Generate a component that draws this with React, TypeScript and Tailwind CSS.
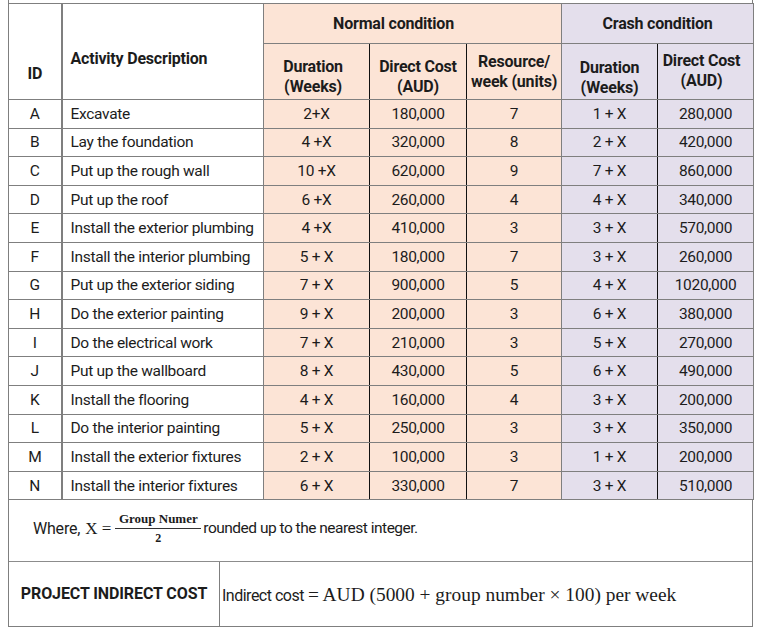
const rows: [string, string, string, string, string, string, string][] = [
  ['A', 'Excavate', '2+X', '180,000', '7', '1 + X', '280,000'],
  ['B', 'Lay the foundation', '4 +X', '320,000', '8', '2 + X', '420,000'],
  ['C', 'Put up the rough wall', '10 +X', '620,000', '9', '7 + X', '860,000'],
  ['D', 'Put up the roof', '6 +X', '260,000', '4', '4 + X', '340,000'],
  ['E', 'Install the exterior plumbing', '4 +X', '410,000', '3', '3 + X', '570,000'],
  ['F', 'Install the interior plumbing', '5 + X', '180,000', '7', '3 + X', '260,000'],
  ['G', 'Put up the exterior siding', '7 + X', '900,000', '5', '4 + X', '1020,000'],
  ['H', 'Do the exterior painting', '9 + X', '200,000', '3', '6 + X', '380,000'],
  ['I', 'Do the electrical work', '7 + X', '210,000', '3', '5 + X', '270,000'],
  ['J', 'Put up the wallboard', '8 + X', '430,000', '5', '6 + X', '490,000'],
  ['K', 'Install the flooring', '4 + X', '160,000', '4', '3 + X', '200,000'],
  ['L', 'Do the interior painting', '5 + X', '250,000', '3', '3 + X', '350,000'],
  ['M', 'Install the exterior fixtures', '2 + X', '100,000', '3', '1 + X', '200,000'],
  ['N', 'Install the interior fixtures', '6 + X', '330,000', '7', '3 + X', '510,000'],
];

const sans = "font-['Roboto','Liberation_Sans',sans-serif]";
const serif = "font-['Liberation_Serif','DejaVu_Serif',serif]";

export default function App() {
  return (
    <div className={`min-h-screen w-[768px] bg-white pl-[8px] text-[#1c1c1c] ${sans}`}>
      <div className="h-[3px] w-[745px] border-x border-[#7f7f7f]" />
      <table className="w-[745px] table-fixed border-collapse">
        <colgroup>
          <col className="w-[53px]" />
          <col className="w-[202px]" />
          <col className="w-[106px]" />
          <col className="w-[97px]" />
          <col className="w-[95px]" />
          <col className="w-[96px]" />
          <col className="w-[96px]" />
        </colgroup>
        <tbody>
          {/* header */}
          <tr className="h-[40px] text-[16px] font-bold tracking-[-0.2px]">
            <td
              rowSpan={2}
              className="border border-r-2 border-[#7f7f7f] pt-[60px] align-top text-center leading-[20px]"
            >
              ID
            </td>
            <td
              rowSpan={2}
              className="border border-[#7f7f7f] pl-[8px] pt-[45px] align-top leading-[20px]"
            >
              Activity Description
            </td>
            <td colSpan={3} className="border border-[#7f7f7f] bg-[#fce4d6] pr-[38px] text-center">
              Normal condition
            </td>
            <td colSpan={2} className="border border-[#7f7f7f] bg-[#e4dfec] text-center">
              Crash condition
            </td>
          </tr>
          <tr className="h-[56px] text-center text-[16px] font-bold leading-[20px] tracking-[-0.2px]">
            <td className="border border-[#7f7f7f] border-r-[#111] bg-[#fce4d6] pr-[7px] pt-[13px] align-top">
              Duration
              <br />
              (Weeks)
            </td>
            <td className="border border-[#7f7f7f] border-r-[#111] bg-[#fce4d6] pt-[13px] align-top">
              Direct Cost
              <br />
              (AUD)
            </td>
            <td className="border border-[#7f7f7f] bg-[#fce4d6] pt-[8px] align-top">
              Resource/
              <br />
              week (units)
            </td>
            <td className="border border-[#7f7f7f] border-r-[#111] bg-[#e4dfec] pt-[14px] align-top">
              Duration
              <br />
              (Weeks)
            </td>
            <td className="border border-[#7f7f7f] bg-[#e4dfec] pr-[8px] pt-[7px] align-top">
              Direct Cost
              <br />
              (AUD)
            </td>
          </tr>

          {/* activities */}
          {rows.map((r) => (
            <tr key={r[0]} className="h-[28.6px] text-[15.5px] leading-[20px] tracking-[-0.3px]">
              <td className="border border-r-2 border-[#7f7f7f] text-center">{r[0]}</td>
              <td className="whitespace-nowrap border border-[#7f7f7f] pl-[8px]">{r[1]}</td>
              <td className="border border-[#7f7f7f] border-r-[#111] bg-[#fce4d6] text-center">{r[2]}</td>
              <td className="border border-[#7f7f7f] border-r-[#111] bg-[#fce4d6] text-center">{r[3]}</td>
              <td className="border border-[#7f7f7f] bg-[#fce4d6] text-center">{r[4]}</td>
              <td className="border border-[#7f7f7f] border-r-[#111] bg-[#e4dfec] text-center">{r[5]}</td>
              <td className="border border-[#7f7f7f] bg-[#e4dfec] text-center">{r[6]}</td>
            </tr>
          ))}
        </tbody>
      </table>

      <div className="w-[745px] border-x border-b border-[#7f7f7f]">
        {/* note */}
        <div className="h-[62px] border-b border-[#8c8c8c] pl-[24px] pt-[12px]">
          <div className="flex items-center">
            <span className="text-[16px] tracking-[-0.2px]">Where,</span>
            <span className={`${serif} ml-[5px] text-[17px]`}>X =</span>
            <span className="ml-[4px] mr-[2px] inline-flex flex-col items-center">
              <span className={`${serif} text-[13px] font-bold leading-[14px]`}>Group Numer</span>
              <span className="my-[2px] h-px w-[86px] bg-[#333]" />
              <span className={`${serif} text-[12px] font-bold leading-[14px]`}>2</span>
            </span>
            <span className="text-[15.5px] tracking-[-0.5px]">rounded up to the nearest integer.</span>
          </div>
        </div>

        {/* indirect cost */}
        <div className="flex h-[64px] items-center">
          <div className="flex h-full w-[211px] items-center justify-center border-r border-[#7f7f7f] whitespace-nowrap text-[16px] font-bold tracking-[-0.1px]">
            PROJECT INDIRECT COST
          </div>
          <div className="pl-[2px] whitespace-nowrap">
            <span className="text-[16px] tracking-[-0.5px]">Indirect cost</span>{' '}
            <span className={`${serif} text-[19.4px]`}>= AUD (5000 + group number × 100) per week</span>
          </div>
        </div>
      </div>
    </div>
  );
}
